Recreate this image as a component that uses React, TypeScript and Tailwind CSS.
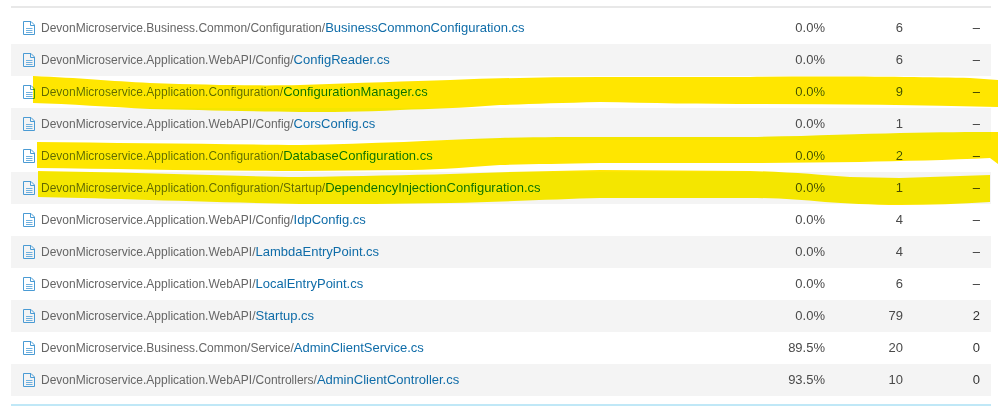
const rows: [string, string, string, string, string][] = [
  ["DevonMicroservice.Business.Common/Configuration/", "BusinessCommonConfiguration.cs", "0.0%", "6", "–"],
  ["DevonMicroservice.Application.WebAPI/Config/", "ConfigReader.cs", "0.0%", "6", "–"],
  ["DevonMicroservice.Application.Configuration/", "ConfigurationManager.cs", "0.0%", "9", "–"],
  ["DevonMicroservice.Application.WebAPI/Config/", "CorsConfig.cs", "0.0%", "1", "–"],
  ["DevonMicroservice.Application.Configuration/", "DatabaseConfiguration.cs", "0.0%", "2", "–"],
  ["DevonMicroservice.Application.Configuration/Startup/", "DependencyInjectionConfiguration.cs", "0.0%", "1", "–"],
  ["DevonMicroservice.Application.WebAPI/Config/", "IdpConfig.cs", "0.0%", "4", "–"],
  ["DevonMicroservice.Application.WebAPI/", "LambdaEntryPoint.cs", "0.0%", "4", "–"],
  ["DevonMicroservice.Application.WebAPI/", "LocalEntryPoint.cs", "0.0%", "6", "–"],
  ["DevonMicroservice.Application.WebAPI/", "Startup.cs", "0.0%", "79", "2"],
  ["DevonMicroservice.Business.Common/Service/", "AdminClientService.cs", "89.5%", "20", "0"],
  ["DevonMicroservice.Application.WebAPI/Controllers/", "AdminClientController.cs", "93.5%", "10", "0"],
];

function FileIcon() {
  return (
    <svg width="12" height="14" viewBox="0 0 12 14" fill="none" stroke="#4a9bd4" strokeWidth="1" className="shrink-0">
      <path d="M0.5 0.5H8L11.5 4V13.5H0.5Z" />
      <path d="M7.5 0.5V4.5H11.5" />
      <path d="M3 7.5H9.5M3 9.5H9.5M3 11.5H9.5" stroke="#6fb0de" />
    </svg>
  );
}

export default function App() {
  return (
    <div className="relative h-[406px] w-[1006px] overflow-hidden bg-white font-['Liberation_Sans',Arial,sans-serif]">
      <div className="ml-[11px] w-[980px] pt-[6px]">
        <div className="h-[2px] bg-[#e8e8e8]" />
        <div className="pt-[4px]">
          {rows.map((r, i) => (
            <div key={i} className={`flex h-[32px] items-center ${i % 2 === 1 ? "bg-[#f4f4f4]" : "bg-white"}`}>
              <div className="flex min-w-0 flex-1 items-center pl-[12px] whitespace-nowrap">
                <FileIcon />
                <span className="ml-[6px] text-[12px] text-[#666666]">{r[0]}</span>
                <span className="text-[13px] text-[#0f6ca8]">{r[1]}</span>
              </div>
              <div className="w-[70px] text-right text-[13px] text-[#4a4a4a]">{r[2]}</div>
              <div className="w-[78px] text-right text-[13px] text-[#4a4a4a]">{r[3]}</div>
              <div className="w-[77px] text-right text-[13px] text-[#333333]">{r[4]}</div>
              <div className="w-[11px]" />
            </div>
          ))}
        </div>
      </div>
      <div className="absolute left-[11px] top-[404px] h-[2px] w-[980px] bg-[#c0e8f7]" />
      <svg className="pointer-events-none absolute left-0 top-0 mix-blend-darken" width="1006" height="406" viewBox="0 0 1006 406">
        <path fill="#ffe600" d="M33 76 C80 78 110 81 150 83 C210 85 260 86 300 85 C360 83 410 81 450 80 C500 78 550 77 600 77 L750 77 C830 76 920 77 970 78 L998 80 L998 107 C920 105 840 104 760 104 C700 104 650 103 600 102 C560 103 530 104 500 105 C460 108 430 109 400 110 C360 112 330 112 300 112 C240 111 190 110 150 109 C110 107 70 104 33 103 Z" />
        <path fill="#ffe600" d="M37 142 C120 143 220 144 300 145 C370 144 440 140 500 138 C540 137 570 137 600 137 L750 137 C810 136 860 134 900 133 C940 132 970 132 998 132 L998 164 L990 158 C950 160 900 161 860 162 L760 163 L600 163 C560 164 530 164 500 165 C460 168 430 170 400 170 L300 171 C220 171 120 169 37 168 Z" />
        <path fill="#ffe600" d="M38 171 C120 172 220 176 300 177 C360 176 410 175 450 174 C500 172 550 171 600 170 L750 171 C790 172 820 175 850 177 L900 178 C930 177 960 176 990 175 L990 202 C960 204 930 205 900 205 C870 205 845 203 825 202 C800 200 780 198 750 198 L600 198 C560 199 500 202 450 203 C400 204 350 204 300 204 C200 202 100 198 38 197 Z" />
      </svg>
    </div>
  );
}
